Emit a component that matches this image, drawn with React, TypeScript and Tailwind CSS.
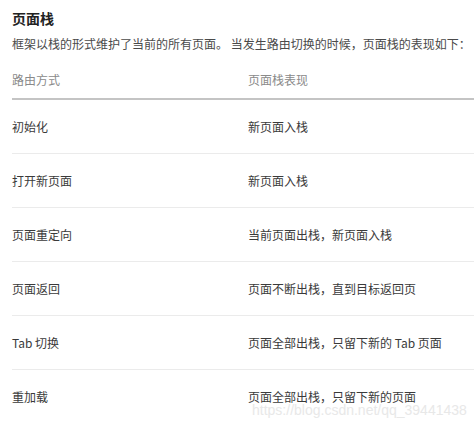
const rows: [string, string][] = [
  ['初始化', '新页面入栈'],
  ['打开新页面', '新页面入栈'],
  ['页面重定向', '当前页面出栈，新页面入栈'],
  ['页面返回', '页面不断出栈，直到目标返回页'],
  ['Tab 切换', '页面全部出栈，只留下新的 Tab 页面'],
  ['重加载', '页面全部出栈，只留下新的页面'],
];

export default function App() {
  return (
    <div
      className="relative w-[474px] h-[424px] overflow-hidden bg-white pl-3 pt-2"
      style={{ fontFamily: '"Noto Sans CJK SC", "Noto Sans", sans-serif' }}
    >
      <h2 className="text-[14px] leading-[20px] font-bold text-[#222]">页面栈</h2>
      <p className="mt-[7px] text-[12px] leading-[18px] text-[#4a4a4a] whitespace-nowrap">
        框架以栈的形式维护了当前的所有页面。 当发生路由切换的时候，页面栈的表现如下：
      </p>

      <div className="mt-[9px]">
        <div className="flex h-[38px] items-center border-b-2 border-[#c4c4c4] text-[12px] text-[#8a8a8a]">
          <div className="w-[236px]">路由方式</div>
          <div>页面栈表现</div>
        </div>
        {rows.map(([a, b], i) => (
          <div
            key={a}
            className={`flex h-[54px] items-center text-[12px] text-[#3a3a3a] ${
              i < rows.length - 1 ? 'border-b border-[#ebebeb]' : ''
            }`}
          >
            <div className="w-[236px]">{a}</div>
            <div>{b}</div>
          </div>
        ))}
      </div>

      <div
        className="absolute left-[252px] top-[402px] text-[14px] leading-[16px] text-[#e8e8e8] whitespace-nowrap"
        style={{ fontFamily: '"Liberation Sans", Arial, sans-serif' }}
      >
        https://blog.csdn.net/qq_39441438
      </div>
    </div>
  );
}
